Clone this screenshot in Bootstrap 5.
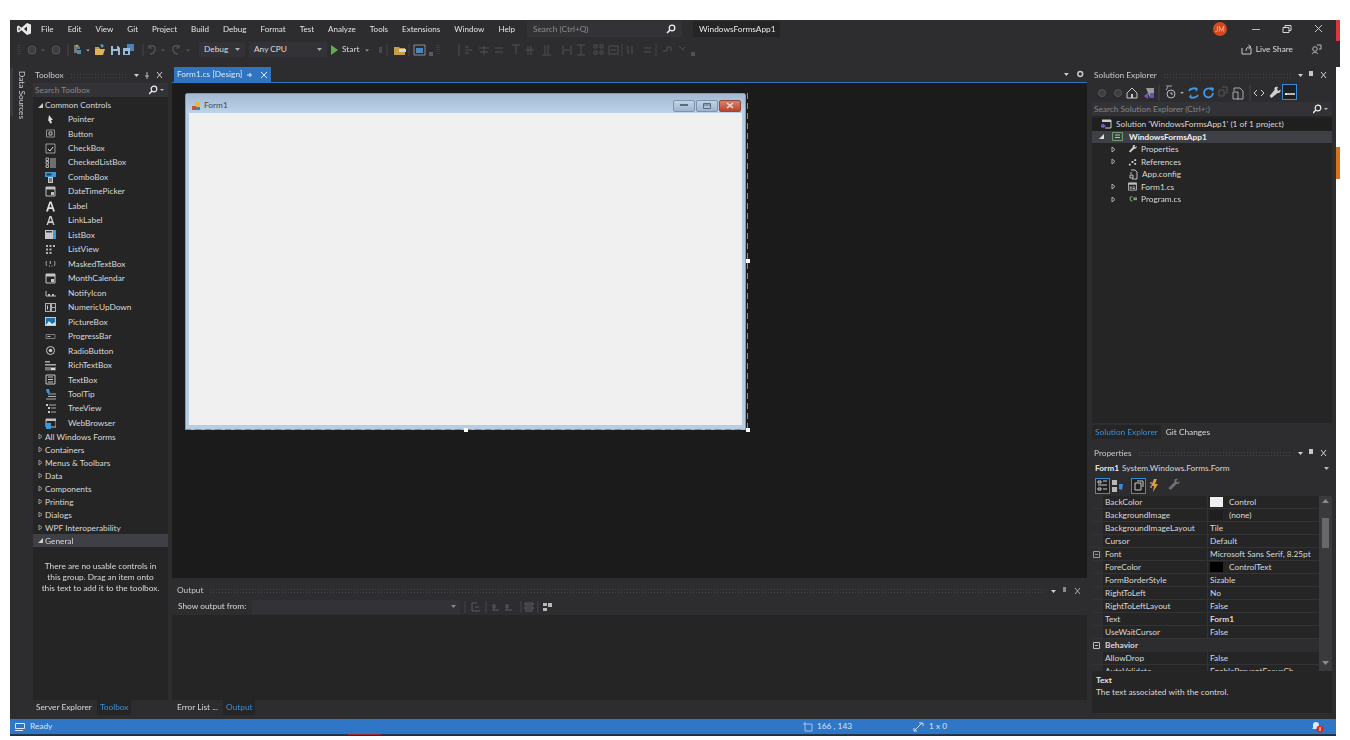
<!DOCTYPE html>
<html lang="en">
<head>
<meta charset="utf-8">
<title>Visual Studio - WindowsFormsApp1</title>
<link href="https://cdn.jsdelivr.net/npm/bootstrap@5.3.0/dist/css/bootstrap.min.css" rel="stylesheet">
<style>
html,body{height:100%;margin:0;overflow:hidden;background:#fff}
body{font-family:"Lato","Open Sans",sans-serif;font-size:8.3px;line-height:1;color:#d8d8d8;white-space:nowrap}
svg{display:block;flex:none}
.stage{padding:20px 0 0 10px;height:740px;filter:blur(.55px)}
.vs{width:1326px;height:716px;background:#2d2d30}
.edge{width:4px;height:716px}
.e-red{height:21px;background:#d9363e}
.e-dark{height:26px;background:#2d2d30}
.e-gap{height:80px}
.e-org{height:32px;background:#d6731f}
.titlebar{height:21px;padding-bottom:3px}
.mlist{gap:14px;padding-left:34px;color:#e2e2e2;width:520px;font-size:8.05px}
.logo{margin-left:6px;margin-right:-25px}
.qsearch{width:155px;height:16px;background:#333337;color:#8c8c8c;padding:0 6px}
.wname{margin-left:11px;width:87px;height:16px;background:#252526;color:#e8e8e8;padding-left:6px}
.avatar{margin-left:auto;width:14px;height:14px;border-radius:50%;background:#d3491d;color:#f6b8a0;font-size:7px}
.winbtns{margin-left:25px;margin-right:8px}
.toolbar{height:24px;padding-top:1px;align-items:flex-start}
.tbcombo{height:15px;margin-left:2px;background:#333337;color:#dcdcdc;padding:0 5px}
.c-debug{width:46px}.c-cpu{width:78px;margin-left:4px}
.playic{margin-left:2px}
.starttxt{margin-top:3px;margin-left:3px;width:18px;color:#dcdcdc}
.lshare{margin-left:auto;margin-top:2px;margin-right:14px;color:#dcdcdc}
.lshare span{margin:0 18px 0 4px}
.mainrow{height:654px}
.dstrip{width:23px}
.dtab{height:48px;margin-top:3px;writing-mode:vertical-rl;padding-left:5px;padding-top:3px;color:#cfcfcf;border-left:3px solid #3a3a3e;font-size:8.3px}
.dockl{width:135px}
.paneltitle{height:16px;padding-left:2px;color:#c8c8c8}
.ptop{margin-top:2px}
.paneltitle .grip{flex:1;height:5px;margin:0 6px;background-image:radial-gradient(#46464a 40%,transparent 45%);background-size:3px 3px}
.searchrow{height:14px;background:#333337;color:#858585;padding-left:2px}
.searchrow svg{margin-left:auto}
.tlist{flex:1;background:#252526;padding-top:2px;min-height:0}
.grp{height:13px;padding-left:5px}
.grp svg{margin-right:2px}
.grp-on{background:#3f3f46}
.titem{height:14.48px;padding-left:12px}
.titem svg{margin-right:12px}
.nomsg{padding:14px 0 0;text-align:center;line-height:11px}
.tabs{height:19px;padding-bottom:3px}
.btab{height:15px;padding:0 3px;margin-right:2px}
.btab-on{background:#252526;color:#3d8ed8}
.editor{width:915px;margin-left:4px}
.dochead{height:18px;border-bottom:1px solid #2e74c0}
.doctab{margin:2px 0 0 2px;width:97px;height:15px;background:#2e74c0;color:#dfe9f5;padding-left:3px}
.dtctl{margin-right:2px}
.dochead .ctl{margin:0 0 0 auto;padding-right:1px}
.canvas{height:495px;background:#1b1b1c;padding:10px 0 0 13px}
.formwrap{width:561px;height:337px}
.wform{height:100%;border-radius:3px 3px 0 0;background:#b7cde4;border:1px solid #8c99a8;border-bottom-color:#a7bdd5}
.wbar{height:19px;background:linear-gradient(#a4b8d2,#bcd3ea);padding:4px 4px 0 5px;color:#3e4a55}
.wbar svg.mini{margin-right:3px}
.wbtn{width:22px;height:12px;border:1px solid #7e93ad;border-radius:2px;background:linear-gradient(#c3d3e6,#9eb4cf);margin-left:1px}
.wbtn-x{background:linear-gradient(#d98268,#b8452f);border-color:#8d4a3e}
.wclient{height:312px;margin:0 3px;background:#f0f0f0}
.hdl{position:absolute;width:4px;height:4px;background:#fff}
.h-r{left:561px;top:166px}.h-b{left:279px;top:335px}.h-c{left:561px;top:335px}
.dashr,.dashb{position:absolute}
.dashr{left:562px;top:0;width:1px;height:337px;background:repeating-linear-gradient(#8b8b8b 0 6px,transparent 6px 10px)}
.dashb{left:0;top:336px;height:1px;width:562px;background:repeating-linear-gradient(90deg,#8b8b8b 0 6px,transparent 6px 10px)}
.outgap{height:5px}
.outp{height:117px}
.outp .paneltitle{height:15px;padding-left:5px}
.outtb{height:17px;padding-left:6px}
.oflbl{width:69px}
.outcombo{margin-left:5px;width:208px;height:14px;background:#333337}
.outbody{flex:1;background:#252526}
.edtabs{padding-left:2px}
.dockr{width:240px;margin-left:5px}
.sepanel{height:374px;margin-top:2px}
.setb{height:19px}
.stree{flex:1;background:#252526;padding-top:2px}
.trow{height:12.5px}
.t-sol{background:#1f1f20;padding-left:8px}
.t-sol svg{margin-right:4px}
.t-prj{background:#3f3f46;padding-left:7px;font-weight:700;color:#f0f0f0}
.prjic{margin:0 6px 0 8px}
.t-kid{padding-left:19px}
.t-kid svg.ar{margin-right:12px}
.t-noar{padding-left:37px}
.setabs{height:16px;margin-top:2px}
.setabs .btab{padding:0 3px;margin-right:2px;height:14px}
.proppanel{height:269px;margin-top:4px}
.objbar{height:15px;background:#2d2d30;padding-left:3px;padding-right:3px}
.objbar b{margin-right:3px;color:#e8e8e8}
.objbar svg{margin-left:auto}
.ptb{height:20px}
.pgrid{height:175px;overflow:hidden;background:#2d2d30}
.ptable{width:227px}
.prow{height:13px;border-bottom:1px solid #333336;background:#252526}
.pmark{width:11px;height:100%;background:#2d2d30;padding-left:1px;flex:none}
.pname{width:105px;padding-left:2px;flex:none;border-right:1px solid #333336;height:100%}
.pval{padding-left:2px}
.psw{width:13px;height:10px;margin-right:6px}
.sw-w{background:#f0f0f0}.sw-k{background:#000}.sw-n{background:#1f1f20}
.pcat{background:#2d2d30;font-weight:700;border:0}
.pscroll{width:13px;background:#3a3a3d;padding-top:3px;align-items:center}
.pthumb{width:7px;height:30px;margin-top:15px;background:#68686b}
.pdn{margin-top:auto;margin-bottom:6px}
.pdesc{height:42px;background:#252526;padding:5px 4px}
.pdesc b{display:block;margin-bottom:4px;color:#e8e8e8}
.statusbar{height:15px;background:#2f77c6;color:#d6e5f4}
.statusbar .rd{margin-left:5px;width:26px}
.pos1{margin-left:746px}.pos2{margin-left:58px}
.bell{margin-left:auto;margin-right:12px}
.xy{margin-left:3px;width:38px}
.thinline{height:1px;background:#24364a}
.blip{width:33px;height:1px;margin-left:338px;background:#9c2a2a}
</style>
</head>
<body>
<div class="stage d-flex">
<div class="vs d-flex flex-column">

<!-- title / menu -->
<div class="titlebar d-flex align-items-center">
  <svg class="logo" width="16" height="14" viewBox="0 0 16 14"><path fill="#e8e8e8" d="M11 1l4 1.600v8.800L11 13 5.500 8.200 2.600 10.400 1 9.600V4.400l1.600-.8 2.900 2.200zM2.600 5.300v3.400L4.300 7zM11 4.400L7.900 7l3.100 2.600z"/></svg>
  <div class="mlist d-flex"><span>File</span><span>Edit</span><span>View</span><span>Git</span><span>Project</span><span>Build</span><span>Debug</span><span>Format</span><span>Test</span><span>Analyze</span><span>Tools</span><span>Extensions</span><span>Window</span><span>Help</span></div>
  <div class="qsearch d-flex align-items-center justify-content-between"><span>Search (Ctrl+Q)</span><svg width="10" height="10" viewBox="0 0 10 10"><circle cx="6" cy="4" r="2.800" fill="none" stroke="#eee" stroke-width="1.300"/><path d="M4 6L1 9" stroke="#eee" stroke-width="1.600"/></svg></div>
  <div class="wname d-flex align-items-center">WindowsFormsApp1</div>
  <div class="avatar d-flex align-items-center justify-content-center">JM</div>
  <svg class="winbtns" width="76" height="12" viewBox="0 0 76 12"><path d="M0 6.500h8" stroke="#b8b8b8"/><path d="M31 4.500h6v5h-6zM33 4.500v-2h6v5h-2" fill="none" stroke="#d8d8d8"/><path d="M63 2l7 7M70 2l-7 7" stroke="#c8c8c8"/></svg>
</div>

<!-- toolbar -->
<div class="toolbar d-flex">
  <svg class="ms-1" width="183" height="16" viewBox="4 0 183 16">
    <path d="M8 3v10M10 3v10" stroke="#4a4a4d" stroke-dasharray="1 1"/>
    <circle cx="22" cy="8" r="4" fill="#3d3d40" stroke="#58585b"/><path d="M31 7.500h4l-2 2z" fill="#59595c"/>
    <circle cx="46" cy="8" r="4" fill="#3d3d40" stroke="#58585b"/>
    <path d="M58 2v12" stroke="#454549"/>
    <path d="M64 3h4l2 2v2h-3v4h-3z" fill="#77777a"/><path d="M67 8h4v4h-4z" fill="#3e97a8"/><path d="M67 2l1 2-2 1z" fill="#e4be4a"/>
    <path d="M76 7.500h4l-2 2z" fill="#a0a0a0"/>
    <path d="M85 7h10l-2 6H85z" fill="#dcb55a"/><path d="M85 7V5h4l1 2z" fill="#c09a45"/><path d="M90 3l2-1 2 2-2 2z" fill="#4a9ad4"/>
    <path d="M101 4h7l2 2v7h-9z" fill="#9dbbd9"/><path d="M103 4h4v3h-4zM103 9h5v4h-5z" fill="#2d2d30"/>
    <path d="M113 6h7v7h-7z" fill="#9dbbd9"/><path d="M117 2h7v7h-4V6h-3z" fill="#4f80b6"/><path d="M115 9h3v3h-3z" fill="#2d2d30"/>
    <path d="M133 2v12" stroke="#454549"/>
    <path d="M139 5c4-3 7 0 6 3s-3 4-5 4M139 3v3h3" fill="none" stroke="#58585b" stroke-width="1.200"/><path d="M151 7.500h4l-2 2z" fill="#59595c"/>
    <path d="M169 5c-4-3-7 0-6 3s3 4 5 4M169 3v3h-3" fill="none" stroke="#58585b" stroke-width="1.200"/><path d="M176 7.500h4l-2 2z" fill="#59595c"/>
  </svg>
  <div class="tbcombo c-debug d-flex align-items-center justify-content-between"><span>Debug</span><svg width="5" height="3" viewBox="0 0 5 3"><path d="M0 0h5L2.500 3z" fill="#aaa"/></svg></div>
  <div class="tbcombo c-cpu d-flex align-items-center justify-content-between"><span>Any CPU</span><svg width="5" height="3" viewBox="0 0 5 3"><path d="M0 0h5L2.500 3z" fill="#aaa"/></svg></div>
  <svg class="playic" width="10" height="16" viewBox="0 0 10 16"><path d="M2 3l7 5-7 5z" fill="#5fb04a"/></svg>
  <span class="starttxt">Start</span>
  <svg width="346" height="16" viewBox="0 0 346 16">
    <path d="M5 7.500h4l-2 2z" fill="#9a9a9a"/>
    <path d="M19 5v6h3V5z" fill="#4a4a4d"/><path d="M27 2v12" stroke="#454549"/>
    <path d="M34 5h5l1 1h5v7H34z" fill="#c89d49"/><path d="M39 7h7v3h-7z" fill="#c8d8ea"/>
    <path d="M49 2v12" stroke="#454549"/>
    <path d="M54 3h11v10H54z" fill="none" stroke="#8f8f92"/><path d="M56 6h7v5h-7z" fill="#4d86bd"/>
    <path d="M69 11h4M69 13h4" stroke="#8a8a8d"/>
    <path d="M77 3v10M79 3v10" stroke="#4a4a4d" stroke-dasharray="1 1"/>
    <g fill="none" stroke="#505053"><path d="M99 2v12M105 5h4M105 8h7M105 11h4"/><path d="M124 4v9M119 6h10M120 10h8"/><path d="M135 6h8M135 10h8"/><path d="M152 3h8M156 3v9"/><path d="M168 4v9M171 4v9M165 8h9"/><path d="M182 13h9M185 3v9M188 3v9"/><path d="M203 3v10M211 3v10M204 8h6"/><path d="M217 3h8M217 13h8M221 3v10"/><path d="M234 3h3v3h-3zM240 3h3v3h-3zM234 9h3v3h-3zM240 9h3v3h-3z"/><rect x="249" y="4" width="9" height="8"/><path d="M251 8h5"/><path d="M262 2v12" stroke="#454549"/><path d="M268 4v8M272 4v8"/><path d="M284 6h7M284 10h7"/><path d="M296 2v12" stroke="#454549"/><path d="M303 9h4V5h4v4"/><path d="M319 4l5 5M325 5l-3 3"/></g>
    <path d="M331 11h4M331 13h4" stroke="#77777a"/>
  </svg>
  <div class="lshare d-flex align-items-center">
    <svg width="11" height="11" viewBox="0 0 11 11"><path d="M1 4v6h9V4M5 7c0-3 1.500-4 4-4M7.500 1L10 3 7.500 5" fill="none" stroke="#c8c8c8"/></svg>
    <span>Live Share</span>
    <svg width="11" height="11" viewBox="0 0 11 11"><circle cx="4" cy="5" r="2.300" fill="none" stroke="#b8b8b8"/><path d="M1 10c.5-2 5-2 6 0M6 1h4v4H8" fill="none" stroke="#b8b8b8"/></svg>
  </div>
</div>

<!-- dock area -->
<div class="mainrow d-flex">
  <div class="dstrip"><div class="dtab">Data Sources</div></div>

  <!-- toolbox -->
  <div class="dockl d-flex flex-column">
    <div class="paneltitle ptop d-flex align-items-center"><span>Toolbox</span><span class="grip"></span><svg class="me-1" width="30" height="8" viewBox="0 0 30 8"><path d="M0 3h5L2.500 6z" fill="#d0d0d0"/><path d="M13 1v4M11 5h4M13 5v3" stroke="#bbb"/><path d="M23 1l5 6M28 1l-5 6" stroke="#d0d0d0"/></svg></div>
    <div class="searchrow d-flex align-items-center"><span>Search Toolbox</span><svg class="me-1" width="15" height="10" viewBox="0 0 15 10"><circle cx="5" cy="4" r="2.800" fill="none" stroke="#eee" stroke-width="1.200"/><path d="M3 6L0 9" stroke="#eee" stroke-width="1.500"/><path d="M11 4h4l-2 2z" fill="#bbb"/></svg></div>
    <div class="tlist">
      <div class="grp d-flex align-items-center"><svg width="5" height="5" viewBox="0 0 5 5"><path d="M5 0v5H0z" fill="#ccc"/></svg><span>Common Controls</span></div>
      <div class="titem d-flex align-items-center"><svg width="11" height="11" viewBox="0 0 11 11"><path d="M4 1l4 5H6l1 3-2 .5-1-3-1 1z" fill="#ddd"/></svg>Pointer</div>
      <div class="titem d-flex align-items-center"><svg width="11" height="11" viewBox="0 0 11 11"><path d="M1.500 2h8v7h-8z" fill="none" stroke="#8f8f92"/><path d="M4 4h3v3H4z" fill="none" stroke="#bbb"/></svg>Button</div>
      <div class="titem d-flex align-items-center"><svg width="11" height="11" viewBox="0 0 11 11"><path d="M1 1h9v9H1z" fill="none" stroke="#9a9a9d"/><path d="M3 6l2 2 3-4" fill="none" stroke="#ddd"/></svg>CheckBox</div>
      <div class="titem d-flex align-items-center"><svg width="11" height="11" viewBox="0 0 11 11"><path d="M1 1h2.500v2.500H1zM1 4.500h2.500V7H1zM1 8h2.500v2.500H1z" fill="none" stroke="#ccc" stroke-width=".8"/><path d="M5 2h6M5 4h6M5 6h6M5 8h6M5 10h6" stroke="#ccc" stroke-width=".9"/></svg>CheckedListBox</div>
      <div class="titem d-flex align-items-center"><svg width="11" height="11" viewBox="0 0 11 11"><path d="M0 0h11v5H0z" fill="#3a9ad9"/><path d="M1.500 1.500h5v2h-5z" fill="#1f3a52"/><path d="M3 5h5v6H3z" fill="#c4c4c4"/><path d="M4 7h3M4 9h3" stroke="#333"/></svg>ComboBox</div>
      <div class="titem d-flex align-items-center"><svg width="11" height="11" viewBox="0 0 11 11"><path d="M1 1h9v9H1z" fill="none" stroke="#c0c0c0"/><path d="M1 1h9v2.500H1z" fill="#c0c0c0"/><path d="M6 6h3v3H6z" fill="#c0c0c0"/></svg>DateTimePicker</div>
      <div class="titem d-flex align-items-center"><svg width="11" height="11" viewBox="0 0 11 11"><path d="M1 10.500L4.500 .5h2l3.500 10H8L7.300 8H3.700L3 10.500zM4.200 6.300h2.600L5.500 2.500z" fill="#e0e0e0"/></svg>Label</div>
      <div class="titem d-flex align-items-center"><svg width="11" height="11" viewBox="0 0 11 11"><path d="M1.500 10L4.500 1h2l3 9H8l-.6-2H3.600L3 10zM4.100 6.300h2.800L5.500 2.800z" fill="#d0d0d0"/></svg>LinkLabel</div>
      <div class="titem d-flex align-items-center"><svg width="11" height="11" viewBox="0 0 11 11"><path d="M0 1h11v9H0z" fill="#c8c8c8"/><path d="M1 2h6v1.500H1z" fill="#3a3a3d"/><path d="M8 1h3v9H8z" fill="#3a9ad9"/></svg>ListBox</div>
      <div class="titem d-flex align-items-center"><svg width="11" height="11" viewBox="0 0 11 11"><path d="M1 1h2v2H1zM4.500 1h2v2h-2zM8 1h2v2H8zM1 4.500h2v2H1zM4.500 4.500h2v2h-2zM1 8h2v2H1zM4.500 8h2v2h-2z" fill="#b4b4b4"/></svg>ListView</div>
      <div class="titem d-flex align-items-center"><svg width="11" height="11" viewBox="0 0 11 11"><path d="M2 3C.5 3 1 8 2 8M9 3c1.500 0 1 5 0 5" fill="none" stroke="#aaa"/><path d="M4 8h1M6.500 8h1M5.300 3v3" stroke="#bbb"/></svg>MaskedTextBox</div>
      <div class="titem d-flex align-items-center"><svg width="11" height="11" viewBox="0 0 11 11"><path d="M1 1h9v9H1z" fill="none" stroke="#c8c8c8"/><path d="M1 1h9v2.500H1zM6 6h3v3H6z" fill="#c8c8c8"/></svg>MonthCalendar</div>
      <div class="titem d-flex align-items-center"><svg width="11" height="11" viewBox="0 0 11 11"><path d="M1 4v5h10" fill="none" stroke="#bbb"/><path d="M3 7h2v2H3zM7 7h2v2H7z" fill="#bbb"/></svg>NotifyIcon</div>
      <div class="titem d-flex align-items-center"><svg width="11" height="11" viewBox="0 0 11 11"><path d="M0 1h11v9H0z" fill="#b0b0b0"/><path d="M1 2h4v7H1zM7 2h3v3H7zM7 6h3v3H7z" fill="#2d2d30"/><path d="M2.500 3.500v4" stroke="#ccc"/></svg>NumericUpDown</div>
      <div class="titem d-flex align-items-center"><svg width="11" height="11" viewBox="0 0 11 11"><path d="M0 1h11v9H0z" fill="#c8c8c8"/><path d="M1 2h9v7H1z" fill="#1d6ea8"/><path d="M1 9l3-4 3 3 3-2v3z" fill="#d8eaf6"/></svg>PictureBox</div>
      <div class="titem d-flex align-items-center"><svg width="11" height="11" viewBox="0 0 11 11"><path d="M1 3.500h9v4H1z" fill="none" stroke="#7c7c7f"/><path d="M2.500 5h3v1h-3z" fill="#bbb"/></svg>ProgressBar</div>
      <div class="titem d-flex align-items-center"><svg width="11" height="11" viewBox="0 0 11 11"><circle cx="5.500" cy="5.500" r="4" fill="none" stroke="#c8c8c8"/><circle cx="5.500" cy="5.500" r="1.800" fill="#c8c8c8"/></svg>RadioButton</div>
      <div class="titem d-flex align-items-center"><svg width="11" height="11" viewBox="0 0 11 11"><path d="M0 1h5v1.500H0zM0 4h11v1.500H0z" fill="#aaa"/><path d="M0 7h11v3.500H0z" fill="#777"/><path d="M6 8h4v2H6z" fill="#ddd"/></svg>RichTextBox</div>
      <div class="titem d-flex align-items-center"><svg width="11" height="11" viewBox="0 0 11 11"><path d="M1 1h9v9H1z" fill="none" stroke="#c4c4c4"/><path d="M3 3h5M3 5.500h5M3 8h5" stroke="#c4c4c4"/></svg>TextBox</div>
      <div class="titem d-flex align-items-center"><svg width="11" height="11" viewBox="0 0 11 11"><path d="M1 0h3l1 4H2z" fill="#3a9ad9"/><path d="M3 5h8M3 7.500h8M1 10h10" stroke="#b0b0b0"/></svg>ToolTip</div>
      <div class="titem d-flex align-items-center"><svg width="11" height="11" viewBox="0 0 11 11"><path d="M1 1h2v2H1zM3 4h2v2H3zM3 8h2v2H3z" fill="#ccc"/><path d="M4 2h7M6 5h5M6 9h5" stroke="#aaa"/></svg>TreeView</div>
      <div class="titem d-flex align-items-center"><svg width="11" height="11" viewBox="0 0 11 11"><path d="M1 1h10v8H1z" fill="none" stroke="#c0c0c0"/><path d="M1 1h10v2H1z" fill="#c0c0c0"/><path d="M1 5h5v6H1z" fill="#3a9ad9"/></svg>WebBrowser</div>
      <div class="grp d-flex align-items-center"><svg width="5" height="7" viewBox="0 0 5 7"><path d="M1 1l3 2.500L1 6z" fill="none" stroke="#999"/></svg><span>All Windows Forms</span></div>
      <div class="grp d-flex align-items-center"><svg width="5" height="7" viewBox="0 0 5 7"><path d="M1 1l3 2.500L1 6z" fill="none" stroke="#999"/></svg><span>Containers</span></div>
      <div class="grp d-flex align-items-center"><svg width="5" height="7" viewBox="0 0 5 7"><path d="M1 1l3 2.500L1 6z" fill="none" stroke="#999"/></svg><span>Menus &amp; Toolbars</span></div>
      <div class="grp d-flex align-items-center"><svg width="5" height="7" viewBox="0 0 5 7"><path d="M1 1l3 2.500L1 6z" fill="none" stroke="#999"/></svg><span>Data</span></div>
      <div class="grp d-flex align-items-center"><svg width="5" height="7" viewBox="0 0 5 7"><path d="M1 1l3 2.500L1 6z" fill="none" stroke="#999"/></svg><span>Components</span></div>
      <div class="grp d-flex align-items-center"><svg width="5" height="7" viewBox="0 0 5 7"><path d="M1 1l3 2.500L1 6z" fill="none" stroke="#999"/></svg><span>Printing</span></div>
      <div class="grp d-flex align-items-center"><svg width="5" height="7" viewBox="0 0 5 7"><path d="M1 1l3 2.500L1 6z" fill="none" stroke="#999"/></svg><span>Dialogs</span></div>
      <div class="grp d-flex align-items-center"><svg width="5" height="7" viewBox="0 0 5 7"><path d="M1 1l3 2.500L1 6z" fill="none" stroke="#999"/></svg><span>WPF Interoperability</span></div>
      <div class="grp grp-on d-flex align-items-center"><svg width="5" height="5" viewBox="0 0 5 5"><path d="M5 0v5H0z" fill="#ccc"/></svg><span>General</span></div>
      <div class="nomsg">There are no usable controls in<br>this group. Drag an item onto<br>this text to add it to the toolbox.</div>
    </div>
    <div class="tabs d-flex"><div class="btab d-flex align-items-center">Server Explorer</div><div class="btab btab-on d-flex align-items-center">Toolbox</div></div>
  </div>

  <!-- editor + output -->
  <div class="editor d-flex flex-column">
    <div class="dochead d-flex">
      <div class="doctab d-flex align-items-center justify-content-between"><span>Form1.cs [Design]</span><svg class="dtctl" width="22" height="8" viewBox="0 0 22 8"><path d="M0 4h5M3 2v4" stroke="#dfe9f5"/><path d="M14 1l6 6M20 1l-6 6" stroke="#dfe9f5"/></svg></div>
      <svg class="ctl mt-1" width="24" height="10" viewBox="0 0 24 10"><path d="M1 4h5L3.500 7z" fill="#ccc"/><circle cx="18" cy="5" r="2.500" fill="none" stroke="#c8c8c8" stroke-width="1.600"/></svg>
    </div>
    <div class="canvas">
      <div class="formwrap position-relative">
        <div class="wform">
          <div class="wbar d-flex align-items-center">
            <svg class="mini" width="10" height="10" viewBox="0 0 10 10"><path d="M4 1h5v5H4z" fill="#e8b838"/><path d="M1 5h4v4H1z" fill="#c8503a"/><path d="M5 6h4v3H5z" fill="#3f7fc4"/></svg>
            <span>Form1</span>
            <div class="ms-auto d-flex">
              <div class="wbtn d-flex align-items-center justify-content-center"><svg width="10" height="3" viewBox="0 0 10 3"><path d="M1 1h8" stroke="#5a6b80" stroke-width="2"/></svg></div>
              <div class="wbtn d-flex align-items-center justify-content-center"><svg width="8" height="6" viewBox="0 0 8 6"><path d="M.5.500h7v5h-7zM1 2h6" fill="none" stroke="#5a6b80"/></svg></div>
              <div class="wbtn wbtn-x d-flex align-items-center justify-content-center"><svg width="8" height="7" viewBox="0 0 8 7"><path d="M1 1l6 5M7 1L1 6" stroke="#e9ddd6" stroke-width="1.600"/></svg></div>
            </div>
          </div>
          <div class="wclient"></div>
        </div>
        <i class="dashr"></i><i class="dashb"></i>
        <i class="hdl h-r"></i><i class="hdl h-b"></i><i class="hdl h-c"></i>
      </div>
    </div>
    <div class="outgap"></div>
    <div class="outp d-flex flex-column">
      <div class="paneltitle d-flex align-items-center"><span>Output</span><span class="grip"></span><svg class="me-1" width="32" height="8" viewBox="0 0 32 8"><path d="M0 3h5L2.500 6z" fill="#d0d0d0"/><path d="M12 0h3v5h-3zM13.500 5v3" fill="#8a8a8d"/><path d="M24 1l5 6M29 1l-5 6" stroke="#aaa"/></svg></div>
      <div class="outtb d-flex align-items-center"><span class="oflbl">Show output from:</span><div class="outcombo d-flex align-items-center justify-content-end"><svg class="me-1" width="5" height="3" viewBox="0 0 5 3"><path d="M0 0h5L2.500 3z" fill="#888"/></svg></div>
        <svg width="100" height="14" viewBox="0 0 100 14"><path d="M5 1v12M26 1v12M61 1v12M78 1v12" stroke="#45454a"/><path d="M12 3h5M12 3v8h8M15 7h4" fill="none" stroke="#5f5f62"/><path d="M33 5h2v3h-2zM32 10h7M46 5h2v3h-2zM45 10h7" fill="none" stroke="#5f5f62"/><path d="M65 3h8v2h-8zM65 7h8v2h-8zM65 11h8" fill="none" stroke="#5f5f62"/><path d="M83 3h4v3h-4zM88 3h4v4h-4zM83 8h4v3h-4z" fill="#b8b8b8"/></svg>
      </div>
      <div class="outbody"></div>
    </div>
    <div class="tabs edtabs d-flex"><div class="btab d-flex align-items-center">Error List ...</div><div class="btab btab-on d-flex align-items-center">Output</div></div>
  </div>

  <!-- right dock -->
  <div class="dockr d-flex flex-column">
    <div class="sepanel d-flex flex-column">
      <div class="paneltitle d-flex align-items-center"><span>Solution Explorer</span><span class="grip"></span><svg class="me-1" width="30" height="8" viewBox="0 0 30 8"><path d="M0 3h5L2.500 6z" fill="#d0d0d0"/><path d="M11 0h4v5h-4zM13 5v3" fill="#c8c8c8"/><path d="M23 1l5 6M28 1l-5 6" stroke="#d0d0d0"/></svg></div>
      <div class="setb d-flex align-items-center">
        <svg width="240" height="20" viewBox="1092 83 240 20">
          <circle cx="1102" cy="93" r="3.500" fill="#3d3d40" stroke="#55555a"/><circle cx="1118" cy="93" r="3.500" fill="#3d3d40" stroke="#55555a"/>
          <path d="M1127 93l5-5 5 5v5h-10z" fill="none" stroke="#c8c8c8"/><path d="M1131 94h2v4h-2z" fill="#c8c8c8"/>
          <path d="M1146 88h8v10h-4z" fill="#9a9a9d"/><path d="M1144 96l4-3v6z" fill="#8a4ec4"/><path d="M1150 93h4v5h-4z" fill="#6b4ec4"/>
          <path d="M1159 85v16" stroke="#45454a"/>
          <path d="M1166 86l6 0M1168 87l-2 3" stroke="#aaa"/><circle cx="1171" cy="94" r="4" fill="none" stroke="#bbb"/><path d="M1171 92v2h2" stroke="#bbb" fill="none"/><path d="M1180 92h4l-2 2z" fill="#aaa"/>
          <path d="M1189 91c1-3 6-3 8-2M1198 95c-1 3-6 3-8 2" fill="none" stroke="#3f9be6" stroke-width="1.800"/><path d="M1195 87l3 2-2 3zM1192 99l-3-2 2-3z" fill="#3f9be6"/>
          <path d="M1212 90a4.500 4.500 0 1 0 1 3" fill="none" stroke="#3f9be6" stroke-width="1.800"/><path d="M1210 87l4 1-1 4z" fill="#3f9be6"/>
          <path d="M1219 90h5v6h-5zM1222 87h5v6h-3" fill="none" stroke="#56565a"/>
          <path d="M1234 88h6l3 3v8h-6M1234 88v3M1233 92h5v7h-5z" fill="none" stroke="#aaa"/>
          <path d="M1250 85v16" stroke="#45454a"/>
          <path d="M1257 90l-3 3 3 3M1261 90l3 3-3 3" fill="none" stroke="#d0d0d0"/>
          <path d="M1278 87c-3-1-4 1-3.500 3l-5 6 2 2 6-5c2 .5 3.500-1 3-3.500l-2 1.500-1.500-1.500z" fill="#cfcfcf"/>
          <rect x="1282.500" y="84.500" width="14" height="15" fill="#1f1f20" stroke="#3a8ad8"/><path d="M1285 94h10" stroke="#e8e8e8" stroke-width="1.500"/><path d="M1285 93.500h2v1.500h-2z" fill="#fff"/>
        </svg>
      </div>
      <div class="searchrow d-flex align-items-center"><span>Search Solution Explorer (Ctrl+;)</span><svg class="me-1" width="15" height="10" viewBox="0 0 15 10"><circle cx="5" cy="4" r="2.800" fill="none" stroke="#eee" stroke-width="1.200"/><path d="M3 6L0 9" stroke="#eee" stroke-width="1.500"/><path d="M11 4h4l-2 2z" fill="#bbb"/></svg></div>
      <div class="stree">
        <div class="trow t-sol d-flex align-items-center"><svg width="12" height="10" viewBox="0 0 12 10"><path d="M2 1h9v8H5" fill="none" stroke="#ccc"/><path d="M2 1h9v2H2z" fill="#ccc"/><path d="M1 6l2-1.500V9L1 8zM3 4.500L6 7 3 9z" fill="#7a58c8"/></svg><span>Solution 'WindowsFormsApp1' (1 of 1 project)</span></div>
        <div class="trow t-prj d-flex align-items-center"><svg width="5" height="5" viewBox="0 0 5 5"><path d="M5 0v5H0z" fill="#ddd"/></svg><svg class="prjic" width="11" height="9" viewBox="0 0 11 9"><path d="M.5.500h10v8H.5z" fill="none" stroke="#6aa06a"/><path d="M3 3h5M3 5.500h5" stroke="#b8b8b8"/></svg><span>WindowsFormsApp1</span></div>
        <div class="trow t-kid d-flex align-items-center"><svg class="ar" width="5" height="7" viewBox="0 0 5 7"><path d="M1 1l3 2.500L1 6z" fill="none" stroke="#aaa"/></svg><svg class="ic me-1" width="9" height="10" viewBox="0 0 10 10"><path d="M8 1C6 0 5 1 5.300 3L1 7.500 2.500 9 7 4.700c2 .3 3-1 2.600-2.700l-1.600 1-1-1z" fill="#d0d0d0"/></svg><span>Properties</span></div>
        <div class="trow t-kid d-flex align-items-center"><svg class="ar" width="5" height="7" viewBox="0 0 5 7"><path d="M1 1l3 2.500L1 6z" fill="none" stroke="#aaa"/></svg><svg class="ic me-1" width="9" height="10" viewBox="0 0 10 10"><path d="M1 7h2v2H1zM7 2h2v2H7zM4 4h2v2H4zM7 6h2v2H7z" fill="#d0d0d0"/></svg><span>References</span></div>
        <div class="trow t-noar d-flex align-items-center"><svg class="me-1" width="9" height="11" viewBox="0 0 9 11"><path d="M2 1h4l2 2v7H3M2 3v2M1 6h3v3H1z" fill="none" stroke="#c0c0c0"/></svg><span>App.config</span></div>
        <div class="trow t-kid d-flex align-items-center"><svg class="ar" width="5" height="7" viewBox="0 0 5 7"><path d="M1 1l3 2.500L1 6z" fill="none" stroke="#aaa"/></svg><svg class="ic me-1" width="9" height="9" viewBox="0 0 10 9"><path d="M.5.500h9v8h-9z" fill="none" stroke="#c0c0c0"/><path d="M.5.500h9v2h-9z" fill="#c0c0c0"/><path d="M2 4.500h2v2.500H2z" fill="#8fc08f"/><path d="M5 5h3M5 6.700h3" stroke="#c0c0c0"/></svg><span>Form1.cs</span></div>
        <div class="trow t-kid d-flex align-items-center"><svg class="ar" width="5" height="7" viewBox="0 0 5 7"><path d="M1 1l3 2.500L1 6z" fill="none" stroke="#aaa"/></svg><svg class="ic me-1" width="9" height="8" viewBox="0 0 10 8"><path d="M5 1.500C2 .5 1 5.500 5 6.500" fill="none" stroke="#5fa05f" stroke-width="1.400"/><path d="M7 2v3.500M9 2v3.500M6 3h4M6 4.500h4" stroke="#b0b0b0" stroke-width=".8"/></svg><span>Program.cs</span></div>
      </div>
      <div class="setabs d-flex"><div class="btab btab-on d-flex align-items-center">Solution Explorer</div><div class="btab d-flex align-items-center">Git Changes</div></div>
    </div>

    <div class="proppanel d-flex flex-column">
      <div class="paneltitle d-flex align-items-center"><span>Properties</span><span class="grip"></span><svg class="me-1" width="30" height="8" viewBox="0 0 30 8"><path d="M0 3h5L2.500 6z" fill="#d0d0d0"/><path d="M11 0h4v5h-4zM13 5v3" fill="#c8c8c8"/><path d="M23 1l5 6M28 1l-5 6" stroke="#d0d0d0"/></svg></div>
      <div class="objbar d-flex align-items-center"><b>Form1</b><span>System.Windows.Forms.Form</span><svg width="5" height="3" viewBox="0 0 5 3"><path d="M0 0h5L2.500 3z" fill="#bbb"/></svg></div>
      <div class="ptb d-flex align-items-center">
        <svg width="100" height="20" viewBox="1092 477 100 20">
          <rect x="1095.500" y="479.500" width="14" height="15" fill="#1f1f20" stroke="#3a8ad8"/><path d="M1098 482h3v2h-3zM1103 482h4M1098 486h9M1098 489h3v2h-3zM1103 490h4" stroke="#ccc" fill="none"/>
          <path d="M1112 481h5v5h-5zM1112 488h5v5h-5z" fill="#b8b8b8"/><path d="M1119 485h4l-1 6-3-1z" fill="#3a8ad8"/>
          <rect x="1131.500" y="479.500" width="14" height="15" fill="#1f1f20" stroke="#3a8ad8"/><path d="M1135 484h6v7h-6zM1137 482h6v6" fill="none" stroke="#ccc"/>
          <path d="M1154 480l3 0-2 5h3l-5 8 1-6h-3z" fill="#d8a23a"/><path d="M1152 484h-2M1152 488h-2" stroke="#ccc"/>
          <path d="M1178 480c-3-1-4 1-3.500 3l-6 6 2 2 6-6c2 .5 3.500-1 3-3l-2 1.500-1.500-1.500z" fill="#717175"/>
        </svg>
      </div>
      <div class="pgrid d-flex">
        <div class="ptable">
          <div class="prow d-flex align-items-center"><i class="pmark"></i><div class="pname d-flex align-items-center">BackColor</div><div class="pval d-flex align-items-center"><i class="psw sw-w"></i>Control</div></div>
          <div class="prow d-flex align-items-center"><i class="pmark"></i><div class="pname d-flex align-items-center">BackgroundImage</div><div class="pval d-flex align-items-center"><i class="psw sw-n"></i>(none)</div></div>
          <div class="prow d-flex align-items-center"><i class="pmark"></i><div class="pname d-flex align-items-center">BackgroundImageLayout</div><div class="pval">Tile</div></div>
          <div class="prow d-flex align-items-center"><i class="pmark"></i><div class="pname d-flex align-items-center">Cursor</div><div class="pval">Default</div></div>
          <div class="prow d-flex align-items-center"><i class="pmark d-flex align-items-center"><svg width="7" height="7" viewBox="0 0 7 7"><path d="M.5.500h6v6h-6zM2 3.500h3" fill="none" stroke="#999"/></svg></i><div class="pname d-flex align-items-center">Font</div><div class="pval">Microsoft Sans Serif, 8.25pt</div></div>
          <div class="prow d-flex align-items-center"><i class="pmark"></i><div class="pname d-flex align-items-center">ForeColor</div><div class="pval d-flex align-items-center"><i class="psw sw-k"></i>ControlText</div></div>
          <div class="prow d-flex align-items-center"><i class="pmark"></i><div class="pname d-flex align-items-center">FormBorderStyle</div><div class="pval">Sizable</div></div>
          <div class="prow d-flex align-items-center"><i class="pmark"></i><div class="pname d-flex align-items-center">RightToLeft</div><div class="pval">No</div></div>
          <div class="prow d-flex align-items-center"><i class="pmark"></i><div class="pname d-flex align-items-center">RightToLeftLayout</div><div class="pval">False</div></div>
          <div class="prow d-flex align-items-center"><i class="pmark"></i><div class="pname d-flex align-items-center">Text</div><div class="pval fw-bold">Form1</div></div>
          <div class="prow d-flex align-items-center"><i class="pmark"></i><div class="pname d-flex align-items-center">UseWaitCursor</div><div class="pval">False</div></div>
          <div class="prow pcat d-flex align-items-center"><i class="pmark d-flex align-items-center"><svg width="7" height="7" viewBox="0 0 7 7"><path d="M.5.500h6v6h-6zM2 3.500h3" fill="none" stroke="#bbb"/></svg></i><div class="pname d-flex align-items-center border-0">Behavior</div></div>
          <div class="prow d-flex align-items-center"><i class="pmark"></i><div class="pname d-flex align-items-center">AllowDrop</div><div class="pval">False</div></div>
          <div class="prow d-flex align-items-center"><i class="pmark"></i><div class="pname d-flex align-items-center">AutoValidate</div><div class="pval">EnablePreventFocusCh...</div></div>
        </div>
        <div class="pscroll d-flex flex-column"><svg width="7" height="4" viewBox="0 0 7 4"><path d="M3.500 0L7 4H0z" fill="#8a8a8d"/></svg><div class="pthumb"></div><svg class="pdn" width="7" height="4" viewBox="0 0 7 4"><path d="M0 0h7L3.500 4z" fill="#8a8a8d"/></svg></div>
      </div>
      <div class="pdesc"><b>Text</b><span>The text associated with the control.</span></div>
    </div>
  </div>
</div>

<!-- status -->
<div class="statusbar d-flex align-items-center">
  <svg class="ms-1" width="11" height="9" viewBox="0 0 11 9"><path d="M1.500 1.500h9v5h-9zM1 8.500h8" fill="none" stroke="#d6e6f6"/></svg>
  <span class="rd">Ready</span>
  <svg class="pos1" width="12" height="10" viewBox="0 0 12 10"><path d="M1 2h9M3 0v9M3 9h7V2" fill="none" stroke="#9fc3e6"/></svg><span class="xy">166 , 143</span>
  <svg class="pos2" width="12" height="10" viewBox="0 0 12 10"><path d="M1 9l8-8M6 1h4v3M1 6v3h3" fill="none" stroke="#cfe0f2"/></svg><span class="ms-1">1 x 0</span>
  <svg class="bell" width="14" height="13" viewBox="0 0 14 13"><path d="M3 8V5a3 3 0 0 1 6 0v3l1 1H2z" fill="#dbe8f5"/><circle cx="10" cy="9" r="3.500" fill="#d8281d"/><path d="M10 7v4" stroke="#fff"/></svg>
</div>
<div class="thinline"><div class="blip"></div></div>
</div>
<div class="edge d-flex flex-column"><div class="e-red"></div><div class="e-dark"></div><div class="e-gap"></div><div class="e-org"></div></div>
</div>
<script src="https://cdn.jsdelivr.net/npm/bootstrap@5.3.0/dist/js/bootstrap.bundle.min.js"></script>
</body>
</html>
